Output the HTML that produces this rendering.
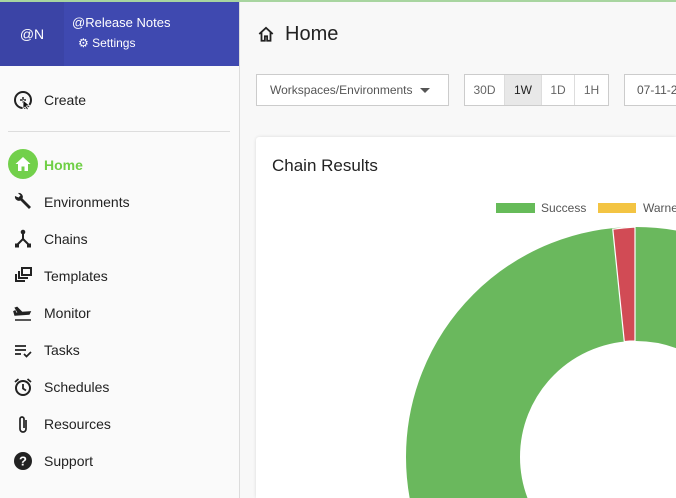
<!DOCTYPE html>
<html><head><meta charset="utf-8"><style>
*{margin:0;padding:0;box-sizing:border-box}
html,body{width:676px;height:498px;overflow:hidden}
body{background:#f8f8f8;font-family:"Liberation Sans",sans-serif;position:relative;color:#222}
.top{position:absolute;left:0;top:0;width:676px;height:2px;background:#a8d5a0}
.side{position:absolute;left:0;top:2px;width:240px;height:496px;background:#fafafa;border-right:1px solid #dcdcdc}
.hdr{position:absolute;left:0;top:2px;width:239px;height:64px;background:#3f49b0}
.hdr .n{position:absolute;left:0;top:0;width:64px;height:64px;background:#3b44a6;color:#fff;font-size:14px;text-align:center;line-height:64px}
.hdr .t{position:absolute;left:72px;top:13px;color:#fff;font-size:13px}
.hdr .s{position:absolute;left:78px;top:34px;color:#fff;font-size:12px}
.item{position:absolute;left:44px;font-size:14px;color:#222}
.ic{position:absolute;left:12px;width:22px;height:22px}
.hr{position:absolute;left:8px;top:131px;width:222px;height:1px;background:#ddd}
.main-h{position:absolute;left:285px;top:23px;font-size:20px;color:#222}
.dd{position:absolute;left:256px;top:74px;width:193px;height:32px;border:1px solid #ccc;background:#fff;font-size:12px;color:#555;line-height:30px;padding-left:13px}
.btns{position:absolute;left:464px;top:74px;height:32px;border:1px solid #ccc;background:#fff;display:flex;font-size:12px;color:#666}
.btns div{line-height:30px;text-align:center;border-right:1px solid #ddd}
.date{position:absolute;left:624px;top:74px;width:60px;height:32px;border:1px solid #ccc;background:#fff;font-size:12px;color:#555;line-height:30px;padding-left:12px}
.card{position:absolute;left:256px;top:137px;width:420px;height:361px;background:#fff;box-shadow:0 0 3px rgba(0,0,0,.12);border-radius:3px 0 0 0}
.card h2{position:absolute;left:16px;top:19px;font-size:17px;font-weight:normal;color:#222}
</style></head><body>
<div class="top"></div>
<div class="side"></div>
<div class="hdr"><div class="n">@N</div><div class="t">@Release Notes</div><div class="s">⚙ Settings</div></div>
<svg class="ic" style="top:89px" viewBox="0 0 22 22"><circle cx="11" cy="11" r="8" fill="none" stroke="#222" stroke-width="2"/><path d="M11 8v6M8 11h6" stroke="#222" stroke-width="1.5"/><path d="M11 11l0 9 2-2 2 3 1.5-1-2-3 3-.5z" fill="#111" stroke="#fff" stroke-width=".8"/></svg>
<div class="item" style="top:92px">Create</div>
<div class="hr"></div>
<div style="position:absolute;left:8px;top:149px;width:30px;height:30px;border-radius:50%;background:#72d04b"></div>
<svg style="position:absolute;left:14px;top:155px" width="18" height="18" viewBox="0 0 18 18"><path d="M9 2L1.5 9H4v7h3.5v-4.5h3V16H14V9h2.5z" fill="#fff"/></svg>
<div class="item" style="top:157px;color:#6fcf45;font-weight:bold">Home</div>
<svg class="ic" style="top:191px" viewBox="0 0 22 22"><path d="M3 5a4 4 0 0 0 5.5 4.5l8.5 8.5 2-2-8.5-8.5A4 4 0 0 0 6 2l2.5 2.5-2 2z" fill="#222"/></svg>
<div class="item" style="top:194px">Environments</div>
<svg class="ic" style="top:228px" viewBox="0 0 22 22"><path d="M11 4v7L5 17M11 11l6 6" stroke="#222" stroke-width="2" fill="none"/><circle cx="11" cy="4" r="2.3" fill="#222"/><rect x="3" y="15.5" width="4" height="4" fill="#222"/><rect x="15" y="15.5" width="4" height="4" fill="#222"/></svg>
<div class="item" style="top:231px">Chains</div>
<svg class="ic" style="top:265px" viewBox="0 0 22 22"><rect x="10" y="3" width="9" height="7" fill="none" stroke="#222" stroke-width="2"/><path d="M7 6v7h9M4 9v7h9" fill="none" stroke="#222" stroke-width="2"/></svg>
<div class="item" style="top:268px">Templates</div>
<svg class="ic" style="top:302px" viewBox="0 0 22 22"><path d="M3 18h16M3 13l14-1 1-2-8 .5-5-5-1.5.5 3 5-2.5.5L3 9l-1 .5z" fill="#222" stroke="#222" stroke-width="1.5"/></svg>
<div class="item" style="top:305px">Monitor</div>
<svg class="ic" style="top:339px" viewBox="0 0 22 22"><path d="M3 7h11M3 11h11M3 15h6M12 15l2.5 2.5 4.5-4.5" fill="none" stroke="#222" stroke-width="1.7"/></svg>
<div class="item" style="top:342px">Tasks</div>
<svg class="ic" style="top:376px" viewBox="0 0 22 22"><circle cx="11" cy="12" r="7" fill="none" stroke="#222" stroke-width="2"/><path d="M11 8v4.5l3 2M3 6l3.5-3M19 6l-3.5-3" fill="none" stroke="#222" stroke-width="1.8"/></svg>
<div class="item" style="top:379px">Schedules</div>
<svg class="ic" style="top:413px" viewBox="0 0 22 22"><path d="M14 7v9a3 3 0 0 1-6 0V6a2 2 0 0 1 4 0v9" fill="none" stroke="#222" stroke-width="1.7"/></svg>
<div class="item" style="top:416px">Resources</div>
<svg class="ic" style="top:450px" viewBox="0 0 22 22"><circle cx="11" cy="11" r="9" fill="#222"/><text x="11" y="15.5" font-size="13" font-weight="bold" fill="#fff" text-anchor="middle" font-family="Liberation Sans">?</text></svg>
<div class="item" style="top:453px">Support</div>

<svg style="position:absolute;left:257px;top:25px" width="18" height="18" viewBox="0 0 16 16"><path d="M2 8L8 2.5 14 8M4 6.5V14h3v-4h2v4h3V6.5" fill="none" stroke="#222" stroke-width="1.6"/></svg>
<div class="main-h">Home</div>
<div class="dd">Workspaces/Environments<span style="position:absolute;right:18px;top:13px;border:5px solid transparent;border-top:5px solid #555;border-bottom:0"></span></div>
<div class="btns"><div style="width:40px">30D</div><div style="width:37px;background:#e8e8e8;color:#222">1W</div><div style="width:33px">1D</div><div style="width:33px;border-right:0">1H</div></div>
<div class="date">07-11-2</div>
<div class="card"><h2>Chain Results</h2>
<div style="position:absolute;left:240px;top:66px;width:39px;height:10px;background:#66bb59"></div>
<div style="position:absolute;left:285px;top:64px;font-size:12px;color:#555">Success</div>
<div style="position:absolute;left:342px;top:66px;width:38px;height:10px;background:#f3c443"></div>
<div style="position:absolute;left:387px;top:64px;font-size:12px;color:#555">Warne</div>
</div>
<svg style="position:absolute;left:0;top:0" width="676" height="498" viewBox="0 0 676 498">
<circle cx="636" cy="457" r="173" fill="none" stroke="#6ab85d" stroke-width="114"/>
<path d="M612.8 229.2A230 230 0 0 1 635 227L635 341A116 116 0 0 0 624.3 341.6Z" fill="#d14b55" stroke="#fff" stroke-width="1.2"/>
</svg>
</body></html>
